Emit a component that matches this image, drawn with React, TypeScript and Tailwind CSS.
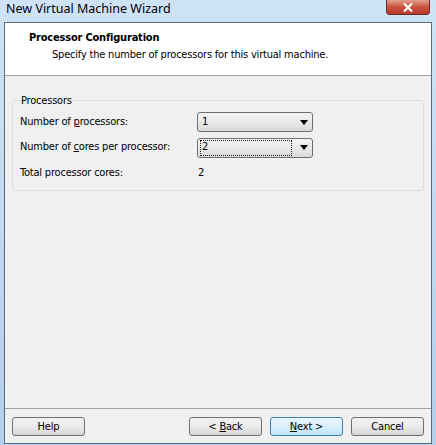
import React from "react";

const UI = "font-['Tahoma','DejaVu_Sans_Condensed','Liberation_Sans',sans-serif]";

function Combo({ value, focused }: { value: string; focused?: boolean }) {
  return (
    <div className="w-[116px] h-[20px] rounded-[3px] border border-[#707070] bg-gradient-to-b from-[#f4f4f4] via-[#e9e9e9] to-[#d9d9d9] flex items-center pl-[2px] pr-[4px]">
      <div
        className={
          focused
            ? "flex-1 h-[16px] mr-[8px] border border-dotted border-[#222] flex items-center pl-[1px]"
            : "flex-1 h-[16px] mr-[8px] flex items-center pl-[2px]"
        }
      >
        {value}
      </div>
      <svg width="8" height="5" viewBox="0 0 8 5">
        <path d="M0 0h8L4 5z" fill="#000" />
      </svg>
    </div>
  );
}

function Btn({ children, primary, className = "" }: { children: React.ReactNode; primary?: boolean; className?: string }) {
  return (
    <button
      className={`w-[73px] h-[19px] rounded-[3px] border text-[11px] leading-none text-black flex items-center justify-center ${
        primary
          ? "border-[#3c7fb1] bg-gradient-to-b from-[#eaf6fd] via-[#d9f0fc] to-[#bee6fd]"
          : "border-[#707070] bg-gradient-to-b from-[#f2f2f2] via-[#ebebeb] to-[#d6d6d6]"
      } ${className}`}
    >
      <span className="whitespace-pre">{children}</span>
    </button>
  );
}

export default function App() {
  return (
    <div className={`w-[436px] h-[445px] overflow-hidden flex flex-col pb-[1px] bg-gradient-to-b from-[#cfe3f6] to-[#b3cfec] ${UI}`}>
      {/* Title bar */}
      <div className="h-[22px] flex items-start justify-between pl-[6px] pr-[6px]">
        <span className="text-[12.5px] leading-[18px] text-black font-['Noto_Sans','Open_Sans',sans-serif]">
          New Virtual Machine Wizard
        </span>
        <div className="w-[44px] h-[15px] rounded-b-[4px] border border-t-0 border-[#6b2a2a] bg-gradient-to-b from-[#e2a08f] via-[#c9503f] to-[#b93a2c] flex items-center justify-center">
          <svg width="10" height="9" viewBox="0 0 10 9">
            <path d="M1 0.5L9 8.5M9 0.5L1 8.5" stroke="#fff" strokeWidth="2.2" />
          </svg>
        </div>
      </div>

      {/* Client area */}
      <div className="flex-1 mx-[4px] border border-[#5b6b80] bg-[#f0f0f0] flex flex-col text-[11px] tracking-[-0.2px] text-black">
        {/* Header */}
        <div className="h-[53px] bg-white border-b border-[#a0a0a0] pl-[24px] pt-[8px]">
          <div className="font-bold text-[11px] leading-[14px]">Processor Configuration</div>
          <div className="pl-[23px] pt-[3px] leading-[14px]">Specify the number of processors for this virtual machine.</div>
        </div>

        {/* Body */}
        <div className="flex-1 px-[7px] pt-[18px]">
          <fieldset className="border border-[#d5dfe5] rounded-[3px] px-[7px] pb-[10px] pt-[1px]">
            <legend className="px-[1px] leading-[13px]">Processors</legend>
            <div className="flex items-center h-[20px] mt-[4px]">
              <span className="w-[177px]">
                Number of <u>p</u>rocessors:
              </span>
              <Combo value="1" />
            </div>
            <div className="flex items-center h-[21px] mt-[5px]">
              <span className="w-[177px]">
                Number of <u>c</u>ores per processor:
              </span>
              <Combo value="2" focused />
            </div>
            <div className="flex items-center h-[14px] mt-[8px]">
              <span className="w-[178px]">Total processor cores:</span>
              <span>2</span>
            </div>
          </fieldset>
        </div>

        {/* Footer */}
        <div className="h-[35px] border-t border-[#a0a0a0] flex items-start pt-[8px] px-[7px]">
          <Btn>Help</Btn>
          <div className="flex-1" />
          <Btn className="mr-[8px]">
            &lt; <u>B</u>ack
          </Btn>
          <Btn primary className="mr-[8px]">
            <u>N</u>ext &gt;
          </Btn>
          <Btn>Cancel</Btn>
        </div>
      </div>
    </div>
  );
}
